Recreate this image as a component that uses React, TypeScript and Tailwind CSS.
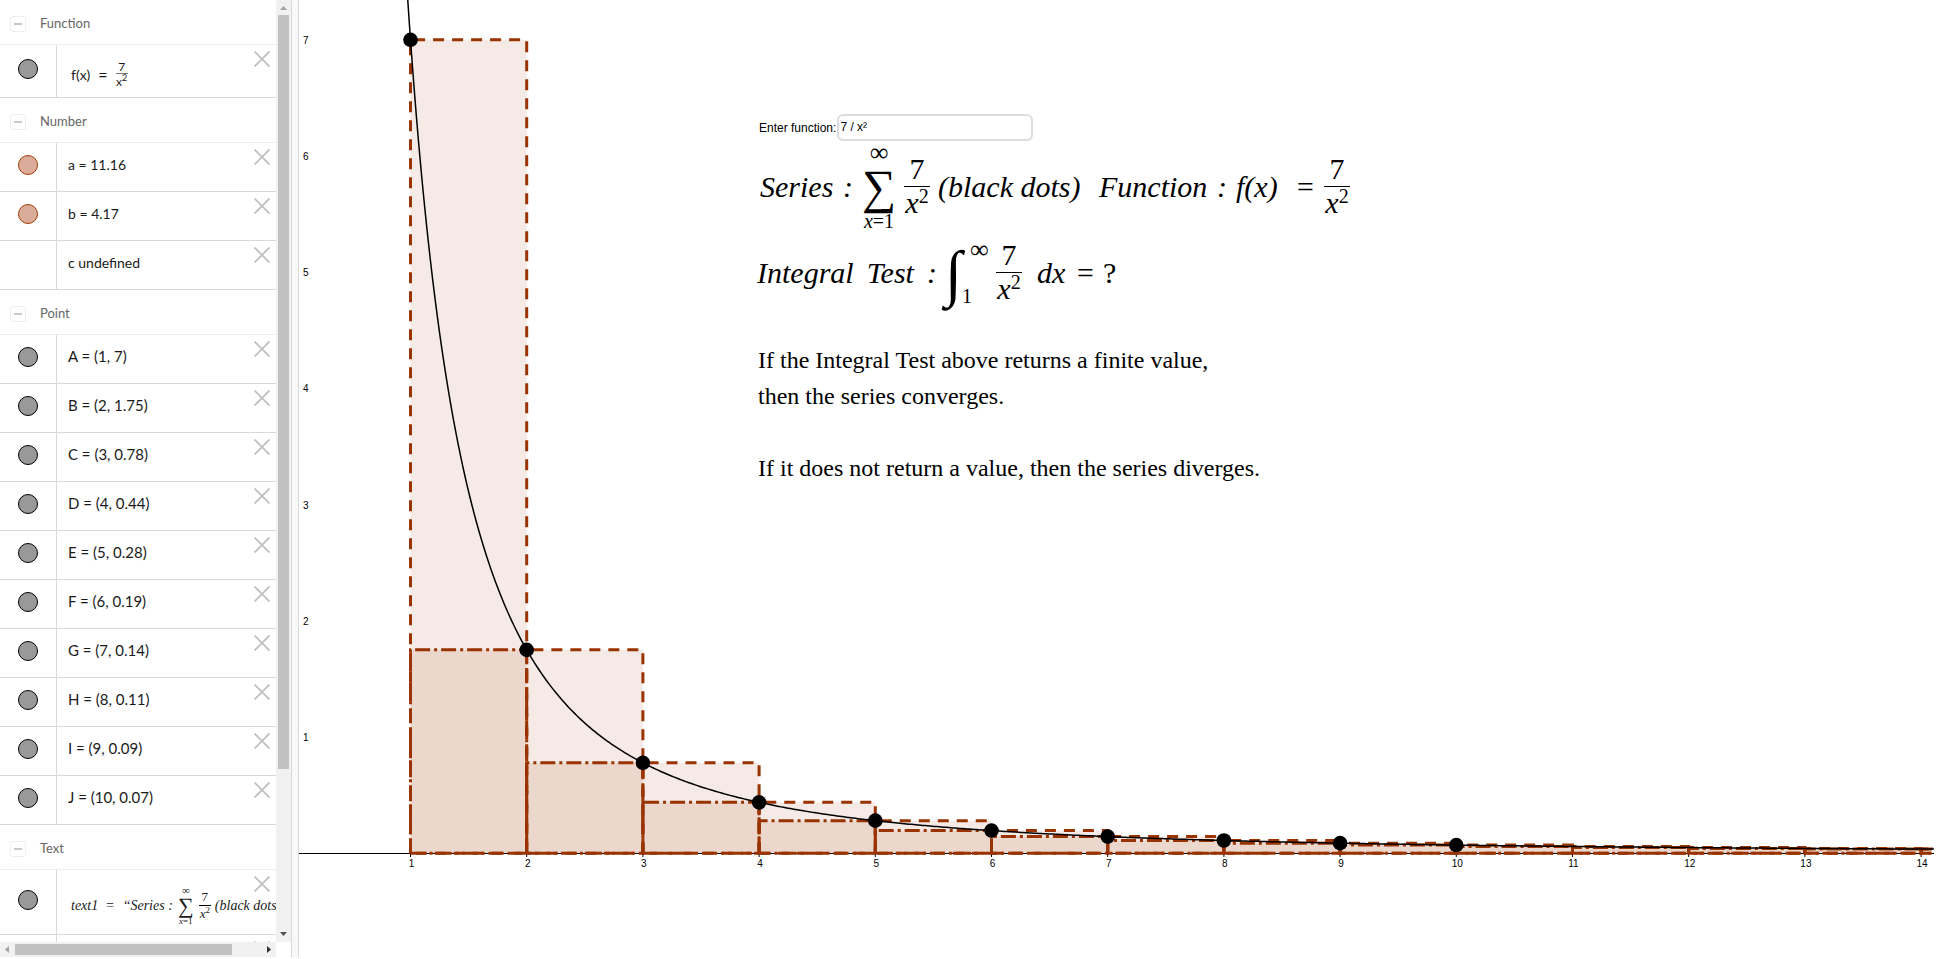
import type { ReactNode } from "react";

const UNIT = 116.2;
const ORIGIN_X = 111.5;
const BASE_Y = 853.2;
const px = (x: number) => ORIGIN_X + (x - 1) * UNIT;
const py = (y: number) => BASE_Y - y * UNIT;
const f = (x: number) => 7 / (x * x);
const STEPS = [1, 2, 3, 4, 5, 6, 7, 8, 9, 10, 11, 12, 13, 14];
const LAST_X = 14.09;

const curve = (() => {
  const parts: string[] = [];
  for (let x = 0.95; x <= 14.12; x += 0.02) {
    parts.push(`${parts.length ? "L" : "M"}${px(x).toFixed(2)} ${py(f(x)).toFixed(2)}`);
  }
  return parts.join(" ");
})();

function Rect({ from, value, dash }: { from: number; value: number; dash: string }) {
  const x0 = px(from);
  const x1 = px(Math.min(from + 1, LAST_X));
  const y = py(value);
  return (
    <path
      d={`M${x0} ${BASE_Y}V${y}H${x1}V${BASE_Y}Z`}
      fill="#993300"
      fillOpacity="0.1"
      stroke="#993300"
      strokeWidth="3"
      strokeDasharray={dash}
    />
  );
}

function Plot() {
  return (
    <svg className="block h-[957px] w-full" role="img" aria-label="Graph of f(x) = 7/x² with upper and lower sums">
      <line x1="0" x2="1635" y1="853.5" y2="853.5" stroke="#000" />
      {STEPS.map((n) => (
        <g key={n}>
          <line x1={px(n)} x2={px(n)} y1="853" y2="857" stroke="#000" />
          <text x={px(n) + 1} y="867" textAnchor="middle" fontSize="10" fontFamily="Liberation Sans, sans-serif">
            {n}
          </text>
        </g>
      ))}
      {[1, 2, 3, 4, 5, 6, 7].map((n) => (
        <text key={n} x="4" y={py(n) + 4} fontSize="10" fontFamily="Liberation Sans, sans-serif">
          {n}
        </text>
      ))}
      {STEPS.map((n) => (
        <Rect key={n} from={n} value={f(n)} dash="11 8" />
      ))}
      {STEPS.map((n) => (
        <Rect key={n} from={n} value={f(Math.min(n + 1, LAST_X))} dash="15 4 3 4" />
      ))}
      <path d={curve} fill="none" stroke="#000" strokeWidth="1.5" />
      {STEPS.slice(0, 10).map((n) => (
        <circle key={n} cx={px(n)} cy={py(f(n))} r="7.3" fill="#000" />
      ))}
    </svg>
  );
}

function Frac() {
  return (
    <span className="inline-flex w-[26px] flex-col items-center not-italic">
      <span className="h-8 w-full border-b border-black text-center leading-7">7</span>
      <span className="h-8 leading-8">
        <i>x</i>
        <sup className="top-[-10px] text-[20px]">2</sup>
      </span>
    </span>
  );
}

function Cross() {
  return (
    <svg className="block size-4" viewBox="0 0 16 16" aria-hidden="true">
      <path d="M.5.5l15 15M15.5.5l-15 15" stroke="#c0c0c0" strokeWidth="1.8" fill="none" />
    </svg>
  );
}

function Group({ name, children }: { name: string; children: ReactNode }) {
  return (
    <section>
      <header className="flex h-[45px] items-center border-b border-[#eeeeee] pt-1 pl-[10px]">
        <button aria-label={`Collapse ${name}`} className="flex size-4 items-center justify-center rounded-[3px] border border-[#eeeeee]">
          <span className="h-[2px] w-2 bg-[#c8c8c8]" />
        </button>
        <h2 className="pb-[2px] pl-[14px] text-[13px] leading-5 text-[#666666]">{name}</h2>
      </header>
      <ul>{children}</ul>
    </section>
  );
}

function Row({
  label,
  marble = "dark",
  height = "h-[49px]",
  size = "text-[14px]",
  children,
}: {
  label: string;
  marble?: "dark" | "brown" | "none";
  height?: string;
  size?: string;
  children: ReactNode;
}) {
  return (
    <li className={`relative flex w-[276px] overflow-hidden border-b border-[#d9d9d9] ${height}`}>
      <div className="flex w-[57px] shrink-0 items-center justify-center border-r border-[#d9d9d9] pb-[4px]">
        {marble !== "none" && (
          <button
            aria-label={`Show or hide ${label}`}
            className={`size-5 rounded-full border ${marble === "dark" ? "border-black bg-[#999999]" : "border-[#a63c0a] bg-[#d9ad99]"}`}
          />
        )}
      </div>
      <div className={`flex items-center pb-[5px] pl-[11px] whitespace-nowrap text-[#1a1a1a] ${size}`}>{children}</div>
      <button aria-label={`Delete ${label}`} className="absolute top-[6px] right-[6px]">
        <Cross />
      </button>
    </li>
  );
}

const POINTS = [
  "A = (1, 7)",
  "B = (2, 1.75)",
  "C = (3, 0.78)",
  "D = (4, 0.44)",
  "E = (5, 0.28)",
  "F = (6, 0.19)",
  "G = (7, 0.14)",
  "H = (8, 0.11)",
  "I = (9, 0.09)",
  "J = (10, 0.07)",
];

function Sidebar() {
  return (
    <aside className="flex h-[957px] w-[291px] shrink-0 flex-col font-['Lato',sans-serif]">
      <div className="flex h-[942px]">
        <div className="w-[276px] overflow-hidden">
          <Group name="Function">
            <Row label="f" height="h-[53px]">
              <span className="flex items-center gap-2 pt-3 pl-[3px]">
                <span>f(x)</span>
                <span className="text-[16px]">=</span>
                <span className="flex w-3 flex-col items-center text-[12px] leading-[13px]">
                  <span className="w-full border-b border-[#777777] text-center">7</span>
                  <span className="leading-4">
                    x<sup className="top-[-5px] text-[9px]">2</sup>
                  </span>
                </span>
              </span>
            </Row>
          </Group>
          <Group name="Number">
            <Row label="a" marble="brown">a = 11.16</Row>
            <Row label="b" marble="brown">b = 4.17</Row>
            <Row label="c" marble="none">c undefined</Row>
          </Group>
          <Group name="Point">
            {POINTS.map((p) => (
              <Row key={p} label={p[0]} size="text-[15px]">
                {p}
              </Row>
            ))}
          </Group>
          <Group name="Text">
            <Row label="text1" height="h-[65px]">
              <span className="flex items-center pt-3 pl-[3px] font-['Liberation_Serif',serif] text-[14px] italic">
                <span className="pr-[7px]">text1</span>
                <span className="pr-[8px]">=</span>
                <span className="pr-1">“Series :</span>
                <span className="flex w-[18px] flex-col items-center text-[9px] leading-[9px] not-italic">
                  <span className="text-[11px]">∞</span>
                  <span className="text-[22px] leading-[22px]">∑</span>
                  <span>
                    <i>x</i>=1
                  </span>
                </span>
                <span className="mx-1 flex w-3 flex-col items-center text-[13px] leading-4 not-italic">
                  <span className="w-full border-b border-black text-center">7</span>
                  <span>
                    <i>x</i>
                    <sup className="top-[-5px] text-[9px]">2</sup>
                  </span>
                </span>
                <span>(black dots)</span>
              </span>
            </Row>
            <Row label="text2">
              <span />
            </Row>
          </Group>
        </div>
        <div className="flex w-[15px] flex-col items-center justify-between bg-[#f1f1f1]">
          <svg className="h-[15px] w-[15px] shrink-0" viewBox="0 0 15 15" aria-hidden="true">
            <path d="M4 10h7L7.500 6z" fill="#a3a3a3" />
          </svg>
          <div className="mb-auto h-[754px] w-[11px] bg-[#c1c1c1]" />
          <svg className="h-[15px] w-[15px] shrink-0" viewBox="0 0 15 15" aria-hidden="true">
            <path d="M4 5h7L7.500 9z" fill="#505050" />
          </svg>
        </div>
      </div>
      <div className="flex h-[15px] w-[276px] items-center bg-[#f1f1f1]">
        <svg className="h-[15px] w-[15px] shrink-0" viewBox="0 0 15 15" aria-hidden="true">
          <path d="M9 4v7L5 7.500z" fill="#a3a3a3" />
        </svg>
        <div className="mr-auto h-[11px] w-[217px] bg-[#c1c1c1]" />
        <svg className="h-[15px] w-[15px] shrink-0" viewBox="0 0 15 15" aria-hidden="true">
          <path d="M6 4v7l4-3.500z" fill="#303030" />
        </svg>
      </div>
    </aside>
  );
}

export default function App() {
  return (
    <div className="flex overflow-hidden bg-white text-black">
      <Sidebar />
      <div className="w-2 shrink-0 border-x border-[#d9d9d9] bg-[#f8f8f8]" />
      <main className="relative min-w-0 flex-1">
        <Plot />
        <label className="absolute top-[114px] left-[460px] flex items-center gap-px font-['Liberation_Sans',sans-serif] text-[12px]">
          Enter function:
          <input defaultValue="7 / x²" className="h-[27px] w-[196px] rounded-md border-2 border-[#dddddd] bg-white px-px pb-px" />
        </label>

        <div className="absolute top-[143px] left-[461px] flex items-center font-['Liberation_Serif',serif] text-[30px] leading-[66px] whitespace-nowrap italic">
          <span className="mr-2 flex w-[93px] justify-between">
            <span>Series</span>
            <span>:</span>
          </span>
          <span className="flex w-9 flex-col items-center text-[20px] leading-5 not-italic">
            <span className="text-[26px]">∞</span>
            <span className="text-[48px] leading-[48px]">∑</span>
            <span>
              <i>x</i>=1
            </span>
          </span>
          <span className="w-[7px]" />
          <Frac />
          <span className="w-[8px]" />
          <span className="w-[161px]">(black dots)</span>
          <span className="mr-[9px] flex w-[128px] justify-between">
            <span>Function</span>
            <span>:</span>
          </span>
          <span className="w-[59px]">f(x)</span>
          <span className="w-[29px]">=</span>
          <Frac />
        </div>

        <div className="absolute top-[240px] left-[458px] flex items-center font-['Liberation_Serif',serif] text-[30px] leading-[66px] whitespace-nowrap italic">
          <span className="mr-[8px] flex w-[180px] justify-between">
            <span>Integral</span>
            <span>Test</span>
            <span>:</span>
          </span>
          <span className="text-[62px] not-italic">∫</span>
          <span className="flex h-[66px] w-[34px] flex-col justify-between text-[20px] leading-5 not-italic">
            <span className="pl-2 text-[26px]">∞</span>
            <span>1</span>
          </span>
          <Frac />
          <span className="w-[15px]" />
          <span className="w-[38px]">dx</span>
          <span className="w-[28px]">=</span>
          <span className="not-italic">?</span>
        </div>

        <div className="absolute top-[342px] left-[459px] font-['Liberation_Serif',serif] text-[24px] leading-9 whitespace-pre">
          <p>If the Integral Test above returns a finite value,</p>
          <p>then the series converges.</p>
          <p className="pt-9">If it does not return a value, then the series diverges.</p>
        </div>
      </main>
    </div>
  );
}
